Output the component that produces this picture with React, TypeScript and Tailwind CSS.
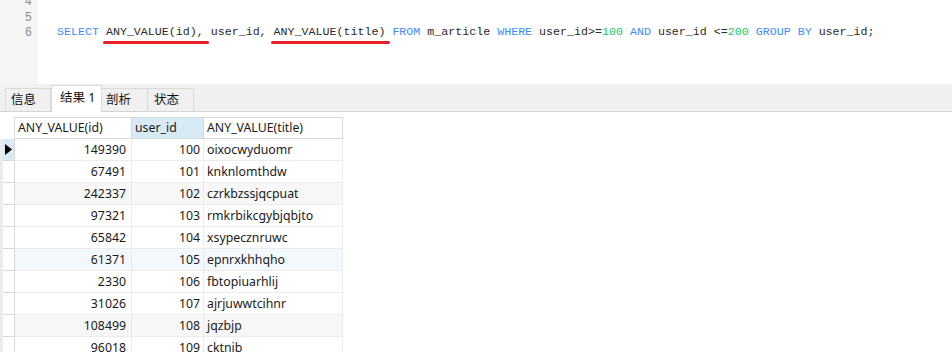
import React from "react";

const rows: [string, string, string][] = [
  ["149390", "100", "oixocwyduomr"],
  ["67491", "101", "knknlomthdw"],
  ["242337", "102", "czrkbzssjqcpuat"],
  ["97321", "103", "rmkrbikcgybjqbjto"],
  ["65842", "104", "xsypecznruwc"],
  ["61371", "105", "epnrxkhhqho"],
  ["2330", "106", "fbtopiuarhlij"],
  ["31026", "107", "ajrjuwwtcihnr"],
  ["108499", "108", "jqzbjp"],
  ["96018", "109", "cktnjb"],
];

const K = ({ children }: { children: React.ReactNode }) => (
  <span className="text-[#3d8bff]">{children}</span>
);
const N = ({ children }: { children: React.ReactNode }) => (
  <span className="text-[#17c964]">{children}</span>
);
const U = ({ children }: { children: React.ReactNode }) => (
  <span className="relative">
    {children}
    <span className="absolute left-[-3px] right-[-5px] top-[16px] h-[3px] rounded-full bg-[#e8202a]" />
  </span>
);

export default function App() {
  const grid = "grid grid-cols-[3px_12px_117px_72px_139px]";
  return (
    <div className="w-[952px] h-[352px] overflow-hidden bg-white" style={{ fontFamily: '"Noto Sans","Noto Sans CJK SC",sans-serif' }}>
      {/* editor */}
      <div className="flex h-[84px]">
        <div className="w-[38px] bg-[#f5f5f5] pr-[6px] text-right text-[12px] leading-[15.5px] text-[#909090] font-['Liberation_Mono',monospace] -mt-[5px]">
          <div>4</div>
          <div>5</div>
          <div>6</div>
        </div>
        <div className="flex-1 pl-[19px] pt-[24px] whitespace-pre text-[11.65px] leading-[16px] text-[#2a2a2a] font-['Liberation_Mono',monospace]">
          <K>SELECT</K> <U>ANY_VALUE(id),</U> user_id, <U>ANY_VALUE(title)</U> <K>FROM</K> m_article <K>WHERE</K> user_id&gt;=<N>100</N> <K>AND</K> user_id &lt;=<N>200</N> <K>GROUP</K> <K>BY</K> user_id;
        </div>
      </div>
      {/* tabs */}
      <div className="h-[28px] bg-[#f0f0f0] border-b border-[#d4d4d4] flex items-end pl-[5px] text-[12.5px] text-[#111]">
        <div className="h-[23px] w-[46px] border border-b-0 border-[#dadada] bg-[#f0f0f0] pl-[5px] leading-[22px]">信息</div>
        <div className="h-[27px] w-[51px] border border-b-0 border-[#dadada] bg-white pl-[8px] leading-[24px] -mb-px">结果 1</div>
        <div className="h-[23px] w-[46px] border border-b-0 border-l-0 border-[#dadada] bg-[#f0f0f0] pl-[4px] leading-[22px]">剖析</div>
        <div className="h-[23px] w-[46px] border border-b-0 border-l-0 border-[#dadada] bg-[#f0f0f0] pl-[6px] leading-[22px]">状态</div>
      </div>
      {/* grid */}
      <div className="flex pt-[5px] text-[12.3px] text-[#1a1a1a]">
        <div className="flex flex-col">
          <div className={grid + " h-[22px]"}>
            <div className="bg-white" />
            <div className="border-r border-[#d8d8d8]" />
            <div className="border-t border-b border-r border-[#d8d8d8] pl-[3px] leading-[20px]">ANY_VALUE(id)</div>
            <div className="border-t border-b border-r border-[#d8d8d8] bg-[#d9eaf7] pl-[3px] leading-[20px]">user_id</div>
            <div className="border-t border-b border-r border-[#d8d8d8] pl-[3px] leading-[20px]">ANY_VALUE(title)</div>
          </div>
          {rows.map((r, i) => {
            const bg = i === 2 || i === 8 ? "bg-[#f7f7f7]" : i === 5 ? "bg-[#f3f8fd]" : "bg-white";
            return (
              <div key={i} className={grid + " h-[22px]"}>
                <div className="bg-[#ececec]" />
                <div className={"border-r border-b border-[#d8d8d8] flex items-center " + (i === 0 ? "bg-[#d9eaf7]" : "bg-white")}>
                  {i === 0 && (
                    <svg width="8" height="11" viewBox="0 0 8 11" className="ml-[2px]">
                      <path d="M0 0 L7 5.5 L0 11 Z" fill="#000" />
                    </svg>
                  )}
                </div>
                <div className={"border-r border-b border-[#ececec] text-right pr-[5px] leading-[21px] " + bg}>{r[0]}</div>
                <div className={"border-r border-b border-[#ececec] text-right pr-[3px] leading-[21px] " + bg}>{r[1]}</div>
                <div className={"border-r border-b border-[#ececec] pl-[3px] leading-[21px] " + bg}>{r[2]}</div>
              </div>
            );
          })}
        </div>
      </div>
    </div>
  );
}
